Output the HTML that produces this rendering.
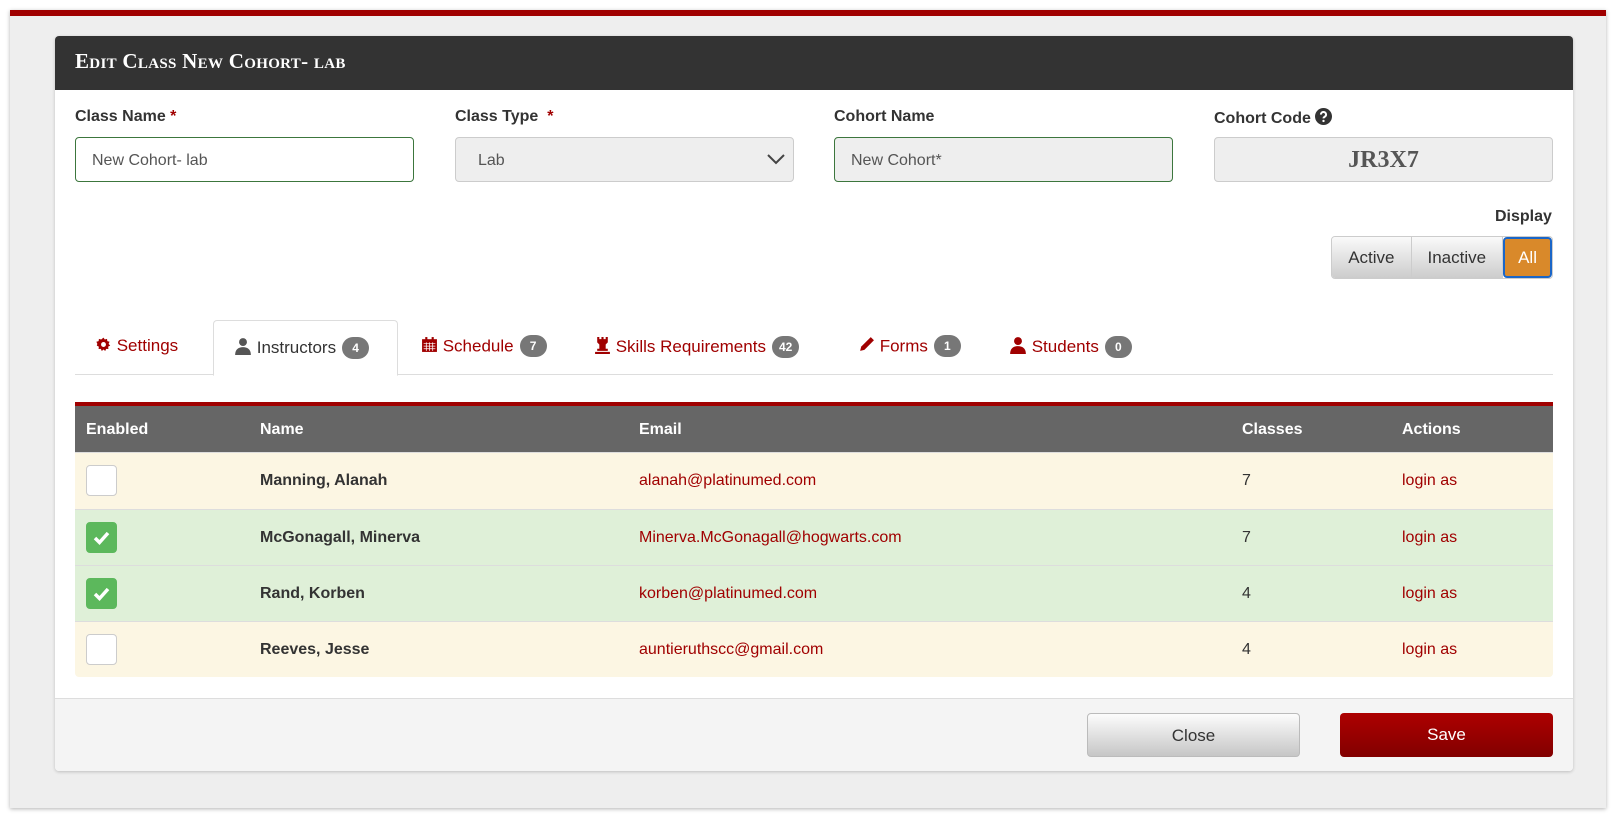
<!DOCTYPE html>
<html><head><meta charset="utf-8"><style>
*{box-sizing:border-box;margin:0;padding:0}
body{width:1616px;height:818px;background:#fff;font-family:"Liberation Sans",sans-serif;font-size:16px;color:#333;position:relative;overflow:hidden}
.outer{position:absolute;left:10px;top:10px;width:1596px;height:798px;background:#eee;border-top:6px solid #a00000;box-shadow:0 1px 4px rgba(0,0,0,.3)}
.modal{position:absolute;left:55px;top:36px;width:1518px;height:735px;background:#fff;border-radius:4px;box-shadow:0 1px 3px rgba(0,0,0,.2);overflow:hidden}
.hdr{height:54px;background:#333;color:#fff;font-family:"Liberation Serif",serif;font-weight:bold;font-variant:small-caps;font-size:21px;padding:13px 0 0 20px;letter-spacing:.3px}
.abs{position:absolute}
.lbl{font-weight:bold;font-size:16px;color:#333}
.req{color:#a00000}
.inp{position:absolute;top:101px;height:45px;width:339px;border:1px solid #ccc;border-radius:4px;background:#eee;padding:14px 16px;font-size:16px;color:#555}
.grp{position:absolute;top:200px;right:20px;height:43px;display:flex;border:1px solid #ccc;border-radius:4px;overflow:hidden}
.grp div{height:100%;padding:11px 16px;font-size:17px;color:#333;background:linear-gradient(#fafafa,#ccc);border-right:1px solid #ccc}
.tabs{position:absolute;top:284px;left:20px;width:1478px;height:55px;border-bottom:1px solid #ddd}
.tab{position:absolute;top:0;height:55px;padding-top:16px;color:#a00000;font-size:17px;white-space:nowrap}
.tab.act{background:#fff;border:1px solid #ddd;border-bottom-color:#fff;border-radius:4px 4px 0 0;color:#333;height:56px}
.badge{display:inline-block;background:#777;color:#fff;font-size:12px;font-weight:bold;border-radius:11px;min-width:27px;height:22px;line-height:22px;text-align:center;padding:0 7px;vertical-align:middle;margin-left:6px;position:relative;top:-1px}
.tbl{position:absolute;left:20px;top:366px;width:1478px}
.th{height:51px;background:#666;border-top:4px solid #a00000;border-bottom:1px solid #ddd;position:relative;color:#fff;font-weight:bold}
.row{height:56px;position:relative;border-top:1px solid #ddd}
.c{position:absolute;top:19px}
.th .c{top:15px}
.cb{position:absolute;left:11px;top:12px;width:31px;height:31px;border:1px solid #ccc;border-radius:4px;background:#fff}
.cb.on{background:#5cb85c;border-color:#5cb85c}
a{color:#a00000;text-decoration:none}
.ft{position:absolute;left:0;top:662px;width:1518px;height:73px;background:#f4f4f4;border-top:1px solid #ddd}
.btn{position:absolute;top:14px;height:44px;width:213px;border-radius:4px;text-align:center;font-size:17px;padding-top:12px}
</style></head><body>
<div class="outer"></div>
<div class="modal">
<div class="hdr">Edit Class New Cohort- lab</div>
<div class="abs lbl" style="left:20px;top:72px">Class Name <span class="req">*</span></div>
<div class="abs lbl" style="left:400px;top:72px">Class Type &nbsp;<span class="req">*</span></div>
<div class="abs lbl" style="left:779px;top:72px">Cohort Name</div>
<div class="abs lbl" style="left:1159px;top:72px">Cohort Code <svg width="17" height="17" viewBox="0 0 16 16" style="vertical-align:-2px"><circle cx="8" cy="8" r="8" fill="#333"/><path d="M5.6 6.2a2.4 2.4 0 1 1 3.4 2.1c-.7.4-1 .7-1 1.5" stroke="#fff" stroke-width="1.9" fill="none"/><circle cx="8" cy="12.2" r="1.1" fill="#fff"/></svg></div>
<div class="inp" style="left:20px;background:#fff;border-color:#3c763d">New Cohort- lab</div>
<div class="inp" style="left:400px;padding-left:22px">Lab<svg class="abs" style="right:8px;top:16px" width="18" height="11" viewBox="0 0 18 11"><path d="M1 1l8 8 8-8" stroke="#444" stroke-width="2" fill="none"/></svg></div>
<div class="inp" style="left:779px;border-color:#3c763d">New Cohort*</div>
<div class="inp" style="left:1159px;text-align:center;font-family:'Liberation Serif',serif;font-weight:bold;font-size:24px;padding-top:9px;color:#555">JR3X7</div>
<div class="abs lbl" style="left:1440px;top:172px">Display</div>
<div class="grp"><div>Active</div><div>Inactive</div><div style="background:#d9892a;color:#fff;border:2px solid #1a66c8;border-radius:4px;padding:9px 13px">All</div></div>
<div class="tabs">
<div class="tab" style="left:20px"><svg width="17" height="17" viewBox="0 0 16 16" style="vertical-align:-2px"><path d="M8 1.5l1.2 1.8 2.1-.6.3 2.1 2.1.6-.9 2 1.5 1.6-1.9 1 .2 2.2-2.1-.1-.9 2-1.6-1.4-1.6 1.4-.9-2-2.1.1.2-2.2-1.9-1L2.2 7.4l-.9-2 2.1-.6.3-2.1 2.1.6z" fill="#a00000"/><circle cx="8" cy="8" r="2.3" fill="#fff"/></svg> Settings</div>
<div class="tab act" style="left:138px;width:185px;padding-left:20px"><svg width="18" height="18" viewBox="0 0 16 16" style="vertical-align:-2px"><circle cx="8" cy="4.5" r="3.5" fill="#555"/><path d="M1 16c0-5 3-7 7-7s7 2 7 7z" fill="#555"/></svg> Instructors<span class="badge">4</span></div>
<div class="tab" style="left:346px"><svg width="17" height="17" viewBox="0 0 16 16" style="vertical-align:-2px"><rect x="1" y="3" width="14" height="12" fill="#a00000"/><rect x="4" y="1" width="2" height="3" fill="#a00000"/><rect x="10" y="1" width="2" height="3" fill="#a00000"/><path d="M2.5 7h11M2.5 9.5h11M2.5 12h11M5 6v8M8 6v8M11 6v8" stroke="#fff" stroke-width=".7"/></svg> Schedule<span class="badge">7</span></div>
<div class="tab" style="left:519px"><svg width="17" height="18" viewBox="0 0 16 17" style="vertical-align:-2px"><path d="M3 1h2v2h2V1h2v2h2V1h2v5l-2 2v4h2v2H3v-2h2V8L3 6z" fill="#a00000"/><rect x="1" y="15" width="14" height="2" fill="#a00000"/></svg> Skills Requirements<span class="badge">42</span></div>
<div class="tab" style="left:783px"><svg width="17" height="17" viewBox="0 0 16 16" style="vertical-align:-2px"><path d="M12 1l3 3-9 9-4 1 1-4z" fill="#a00000"/></svg> Forms<span class="badge">1</span></div>
<div class="tab" style="left:934px"><svg width="18" height="18" viewBox="0 0 16 16" style="vertical-align:-2px"><circle cx="8" cy="4.5" r="3.5" fill="#a00000"/><path d="M1 16c0-5 3-7 7-7s7 2 7 7z" fill="#a00000"/></svg> Students<span class="badge">0</span></div>
</div>
<div class="tbl">
<div class="th"><span class="c" style="left:11px">Enabled</span><span class="c" style="left:185px">Name</span><span class="c" style="left:564px">Email</span><span class="c" style="left:1167px">Classes</span><span class="c" style="left:1327px">Actions</span></div>
<div class="row" style="background:#fcf6e3;border-top:none"><div class="cb"></div><b class="c" style="left:185px">Manning, Alanah</b><a class="c" style="left:564px">alanah@platinumed.com</a><span class="c" style="left:1167px">7</span><a class="c" style="left:1327px">login as</a></div>
<div class="row" style="background:#dff0d8"><div class="cb on"><svg width="29" height="29" viewBox="0 0 29 29"><path d="M8 15l4.5 4.5L21 10" stroke="#fff" stroke-width="3.5" fill="none"/></svg></div><b class="c" style="left:185px">McGonagall, Minerva</b><a class="c" style="left:564px">Minerva.McGonagall@hogwarts.com</a><span class="c" style="left:1167px">7</span><a class="c" style="left:1327px">login as</a></div>
<div class="row" style="background:#dff0d8"><div class="cb on"><svg width="29" height="29" viewBox="0 0 29 29"><path d="M8 15l4.5 4.5L21 10" stroke="#fff" stroke-width="3.5" fill="none"/></svg></div><b class="c" style="left:185px">Rand, Korben</b><a class="c" style="left:564px">korben@platinumed.com</a><span class="c" style="left:1167px">4</span><a class="c" style="left:1327px">login as</a></div>
<div class="row" style="background:#fcf6e3;border-radius:0 0 4px 4px"><div class="cb"></div><b class="c" style="left:185px">Reeves, Jesse</b><a class="c" style="left:564px">auntieruthscc@gmail.com</a><span class="c" style="left:1167px">4</span><a class="c" style="left:1327px">login as</a></div>
</div>
<div class="ft">
<div class="btn" style="left:1032px;background:linear-gradient(#fcfcfc,#c6c6c6);border:1px solid #bbb;color:#333">Close</div>
<div class="btn" style="left:1285px;background:linear-gradient(#ad0000,#820000);color:#fff">Save</div>
</div>
</div>
</body></html>
